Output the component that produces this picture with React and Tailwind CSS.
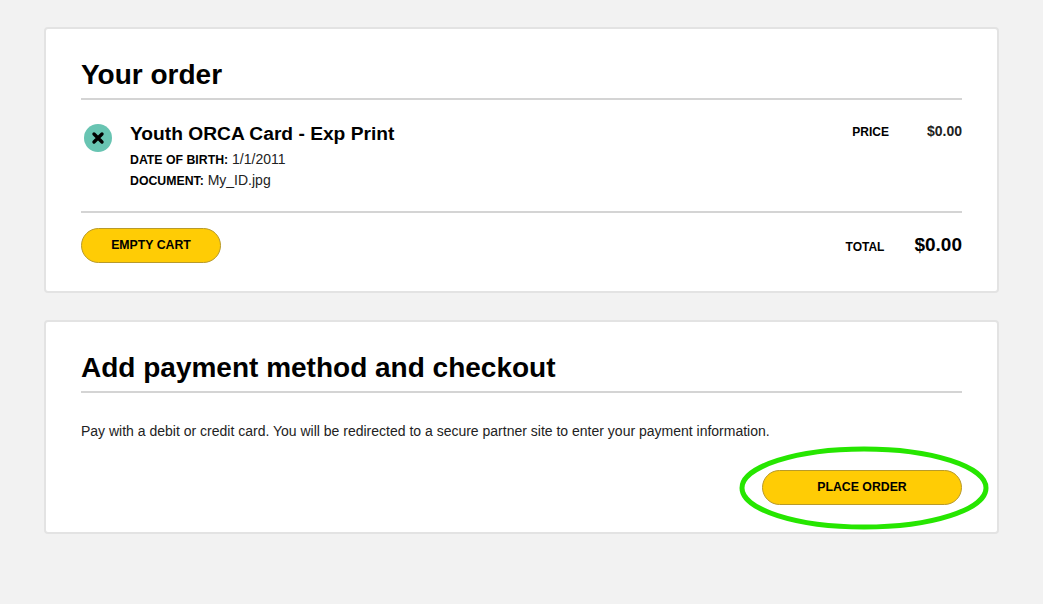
export default function App() {
    return (
        <div className="min-h-screen bg-[#f2f2f2] pt-[27px] pl-[44px] pr-[44px] font-['Liberation_Sans',Arial,sans-serif] text-black">
            {/* Order summary */}
            <div className="h-[266px] w-[955px] rounded-[4px] border-2 border-[#e3e3e3] bg-white px-[35px]">
                <h2 className="mt-[30px] h-[41px] border-b-2 border-[#d4d4d4] text-[28px] leading-[32px] font-bold">Your order</h2>
                <div className="flex h-[113px] justify-between border-b-2 border-[#d4d4d4]">
                    <div className="flex">
                        <div className="mt-[24px] ml-[3px] flex h-[28px] w-[28px] items-center justify-center rounded-full bg-[#68c4b2]">
                            <svg width="14" height="14" viewBox="0 0 14 14">
                                <path d="M3 3 L11 11 M11 3 L3 11" stroke="#000" strokeWidth="3.4" strokeLinecap="round" />
                            </svg>
                        </div>
                        <div className="ml-[18px] pt-[22px]">
                            <div className="text-[19.2px] leading-[24px] font-bold">Youth ORCA Card - Exp Print</div>
                            <div className="mt-[3px] text-[14px] leading-[21px] text-[#222]">
                                <span className="text-[12.3px] font-bold text-black">DATE OF BIRTH:</span> 1/1/2011
                            </div>
                            <div className="-mt-[1px] text-[14px] leading-[21px] text-[#222]">
                                <span className="text-[12.3px] font-bold text-black">DOCUMENT:</span> My_ID.jpg
                            </div>
                        </div>
                    </div>
                    <div className="flex items-baseline pt-[21px]">
                        <span className="text-[12px] font-bold">PRICE</span>
                        <span className="ml-[38px] text-[14px] font-bold text-[#222]">$0.00</span>
                    </div>
                </div>
                <div className="flex items-start justify-between pt-[15px]">
                    <button className="h-[35px] w-[140px] rounded-full border border-[#b89a2a] bg-[#ffcc05] text-[12.3px] font-bold">EMPTY CART</button>
                    <div className="flex items-baseline pt-[3px]">
                        <span className="text-[12px] font-bold">TOTAL</span>
                        <span className="ml-[30px] text-[19px] font-bold">$0.00</span>
                    </div>
                </div>
            </div>

            {/* Payment */}
            <div className="mt-[27px] h-[214px] w-[955px] rounded-[4px] border-2 border-[#e3e3e3] bg-white px-[35px]">
                <h2 className="mt-[30px] h-[41px] border-b-2 border-[#d4d4d4] text-[28px] leading-[32px] font-bold">Add payment method and checkout</h2>
                <p className="mt-[28px] text-[14px] leading-[20px] text-[#222]">
                    Pay with a debit or credit card. You will be redirected to a secure partner site to enter your payment information.
                </p>
                <div className="mt-[29px] flex justify-end">
                    <div className="relative">
                        <button className="h-[35px] w-[200px] rounded-full border border-[#b89a2a] bg-[#ffcc05] text-[12.3px] font-bold">PLACE ORDER</button>
                        {/* Green annotation round the button */}
                        <svg className="absolute top-[-24px] left-[-23px]" width="250" height="84" viewBox="0 0 250 84">
                            <ellipse cx="125" cy="42" rx="122" ry="39" fill="none" stroke="#26e600" strokeWidth="5" />
                        </svg>
                    </div>
                </div>
            </div>
        </div>
    );
}
